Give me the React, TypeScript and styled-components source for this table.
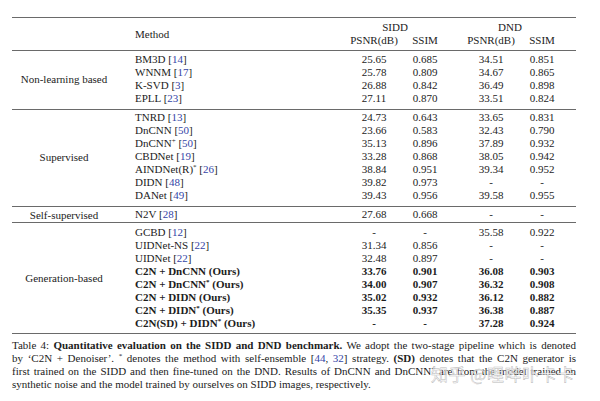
import React from "react";
import styled, { createGlobalStyle } from "styled-components";

const Global = createGlobalStyle`
  body {
    margin: 0;
    background: #ffffff;
    font-family: "Liberation Serif", "Times New Roman", serif;
    color: #1c1c1c;
  }
`;

const Page = styled.div`
  position: relative;
  width: 600px;
  height: 401px;
  padding: 17px 24px 0 12px;
  box-sizing: border-box;
  overflow: hidden;
  font-size: 11px;
`;

const Rule = styled.div`
  height: 1px;
  background: #6a6a6a;
`;

const Header = styled.div`
  display: grid;
  grid-template-columns: 104px 233px 50px 52px 15px 50px 52px 8px;
  grid-auto-rows: 13px;
  line-height: 13px;
  padding: 3px 0;
`;

const HeadCell = styled.div<{ $col: string; $row: string; $shift?: number }>`
  grid-column: ${(p) => p.$col};
  grid-row: ${(p) => p.$row};
  text-align: center;
  white-space: nowrap;
  padding-right: ${(p) => p.$shift ?? 0}px;
`;

const MethodHead = styled.div`
  grid-column: 2;
  grid-row: 1 / 3;
  padding-left: 19px;
  display: flex;
  align-items: center;
`;

const Group = styled.div<{ $top: number; $bottom: number }>`
  display: flex;
  padding: ${(p) => p.$top}px 0 ${(p) => p.$bottom}px;
`;

const Category = styled.div`
  width: 104px;
  display: flex;
  align-items: center;
  justify-content: center;
  white-space: nowrap;
`;

const Rows = styled.div`
  display: flex;
  flex-direction: column;
`;

const Row = styled.div<{ $bold?: boolean }>`
  display: grid;
  grid-template-columns: 233px 50px 52px 15px 50px 52px 8px;
  height: 13px;
  line-height: 13px;
  font-weight: ${(p) => (p.$bold ? 700 : 400)};
  white-space: nowrap;
`;

const Method = styled.div`
  padding-left: 19px;
`;

const Num = styled.div`
  text-align: center;
`;

const Cite = styled.span`
  color: #3344a6;
`;

const Sup = styled.sup`
  font-size: 7px;
  line-height: 0;
  vertical-align: 4px;
`;

const Caption = styled.div`
  margin-top: 5px;
  width: 564px;
  line-height: 13px;
`;

const CaptionLine = styled.div<{ $last?: boolean }>`
  text-align: ${(p) => (p.$last ? "left" : "justify")};
  text-align-last: ${(p) => (p.$last ? "left" : "justify")};
  white-space: nowrap;
`;

const Watermark = styled.div`
  position: absolute;
  left: 431px;
  top: 364px;
  font-family: "Noto Sans CJK SC", "Noto Sans", sans-serif;
  font-size: 17px;
  line-height: 20px;
  color: rgba(255, 255, 255, 0.88);
  -webkit-text-stroke: 0.5px rgba(160, 160, 160, 0.75);
  letter-spacing: 0.5px;
  white-space: nowrap;
  pointer-events: none;
`;

type Entry = {
  name: React.ReactNode;
  vals: string[];
  bold?: boolean;
};

type Block = {
  label: string;
  top: number;
  bottom: number;
  rows: Entry[];
};

const m = (t: string, ref: string, sup?: string) => (
  <>
    {t}
    {sup && <Sup>{sup}</Sup>} [<Cite>{ref}</Cite>]
  </>
);

const blocks: Block[] = [
  {
    label: "Non-learning based",
    top: 2,
    bottom: 4,
    rows: [
      { name: m("BM3D", "14"), vals: ["25.65", "0.685", "34.51", "0.851"] },
      { name: m("WNNM", "17"), vals: ["25.78", "0.809", "34.67", "0.865"] },
      { name: m("K-SVD", "3"), vals: ["26.88", "0.842", "36.49", "0.898"] },
      { name: m("EPLL", "23"), vals: ["27.11", "0.870", "33.51", "0.824"] },
    ],
  },
  {
    label: "Supervised",
    top: 1,
    bottom: 4,
    rows: [
      { name: m("TNRD", "13"), vals: ["24.73", "0.643", "33.65", "0.831"] },
      { name: m("DnCNN", "50"), vals: ["23.66", "0.583", "32.43", "0.790"] },
      { name: m("DnCNN", "50", "+"), vals: ["35.13", "0.896", "37.89", "0.932"] },
      { name: m("CBDNet", "19"), vals: ["33.28", "0.868", "38.05", "0.942"] },
      { name: m("AINDNet(R)", "26", "*"), vals: ["38.84", "0.951", "39.34", "0.952"] },
      { name: m("DIDN", "48"), vals: ["39.82", "0.973", "-", "-"] },
      { name: m("DANet", "49"), vals: ["39.43", "0.956", "39.58", "0.955"] },
    ],
  },
  {
    label: "Self-supervised",
    top: 1,
    bottom: 1,
    rows: [{ name: m("N2V", "28"), vals: ["27.68", "0.668", "-", "-"] }],
  },
  {
    label: "Generation-based",
    top: 3,
    bottom: 3,
    rows: [
      { name: m("GCBD", "12"), vals: ["-", "-", "35.58", "0.922"] },
      { name: m("UIDNet-NS", "22"), vals: ["31.34", "0.856", "-", "-"] },
      { name: m("UIDNet", "22"), vals: ["32.48", "0.897", "-", "-"] },
      { name: "C2N + DnCNN (Ours)", vals: ["33.76", "0.901", "36.08", "0.903"], bold: true },
      {
        name: (
          <>
            C2N + DnCNN<Sup>*</Sup> (Ours)
          </>
        ),
        vals: ["34.00", "0.907", "36.32", "0.908"],
        bold: true,
      },
      { name: "C2N + DIDN (Ours)", vals: ["35.02", "0.932", "36.12", "0.882"], bold: true },
      {
        name: (
          <>
            C2N + DIDN<Sup>*</Sup> (Ours)
          </>
        ),
        vals: ["35.35", "0.937", "36.38", "0.887"],
        bold: true,
      },
      {
        name: (
          <>
            C2N(SD) + DIDN<Sup>*</Sup> (Ours)
          </>
        ),
        vals: ["-", "-", "37.28", "0.924"],
        bold: true,
      },
    ],
  },
];

export default function App() {
  return (
    <>
      <Global />
      <Page>
        <Rule />
        <Header>
          <MethodHead>Method</MethodHead>
          <HeadCell $col="3 / 5" $row="1" $shift={10}>
            SIDD
          </HeadCell>
          <HeadCell $col="6 / 8" $row="1" $shift={14}>
            DND
          </HeadCell>
          <HeadCell $col="3" $row="2">PSNR(dB)</HeadCell>
          <HeadCell $col="4" $row="2">SSIM</HeadCell>
          <HeadCell $col="6" $row="2">PSNR(dB)</HeadCell>
          <HeadCell $col="7" $row="2">SSIM</HeadCell>
        </Header>
        <Rule />
        {blocks.map((b) => (
          <React.Fragment key={b.label}>
            <Group $top={b.top} $bottom={b.bottom}>
              <Category>{b.label}</Category>
              <Rows>
                {b.rows.map((r, j) => (
                  <Row key={j} $bold={r.bold}>
                    <Method>{r.name}</Method>
                    <Num>{r.vals[0]}</Num>
                    <Num>{r.vals[1]}</Num>
                    <div />
                    <Num>{r.vals[2]}</Num>
                    <Num>{r.vals[3]}</Num>
                    <div />
                  </Row>
                ))}
              </Rows>
            </Group>
            <Rule />
          </React.Fragment>
        ))}
        <Caption>
          <CaptionLine>
            Table 4: <b>Quantitative evaluation on the SIDD and DND benchmark.</b> We adopt the
            two-stage pipeline which is denoted
          </CaptionLine>
          <CaptionLine>
            by ‘C2N + Denoiser’. <Sup>*</Sup> denotes the method with self-ensemble [<Cite>44</Cite>,{" "}
            <Cite>32</Cite>] strategy. <b>(SD)</b> denotes that the C2N generator is
          </CaptionLine>
          <CaptionLine>
            first trained on the SIDD and then fine-tuned on the DND. Results of DnCNN and DnCNN
            <Sup>+</Sup> are from the model trained on
          </CaptionLine>
          <CaptionLine $last>
            synthetic noise and the model trained by ourselves on SIDD images, respectively.
          </CaptionLine>
        </Caption>
        <Watermark>知乎 @哩哔卟卡卡</Watermark>
      </Page>
    </>
  );
}
